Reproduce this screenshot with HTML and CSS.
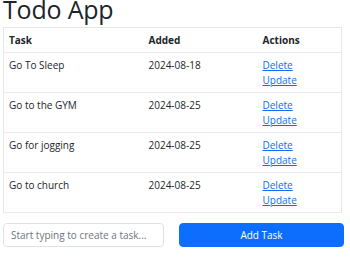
FILE: index.html
```html
<!DOCTYPE html>
<html lang="en">
<head>
    <meta charset="UTF-8">
    <title>Todo App</title>
    <link rel="stylesheet" href="styles.css">
</head>
<body>

    <div id="app">
        <h1 class="title">Todo App</h1>

        <table class="todos">
            <thead>
                <tr>
                    <th class="c-task">Task</th>
                    <th class="c-added">Added</th>
                    <th class="c-actions">Actions</th>
                </tr>
            </thead>
            <tbody>
                <tr>
                    <td>Go To Sleep</td>
                    <td>2024-08-18</td>
                    <td><a href="javascript:void(0)">Delete</a><a href="javascript:void(0)">Update</a></td>
                </tr>
                <tr>
                    <td>Go to the GYM</td>
                    <td>2024-08-25</td>
                    <td><a href="javascript:void(0)">Delete</a><a href="javascript:void(0)">Update</a></td>
                </tr>
                <tr>
                    <td>Go for jogging</td>
                    <td>2024-08-25</td>
                    <td><a href="javascript:void(0)">Delete</a><a href="javascript:void(0)">Update</a></td>
                </tr>
                <tr>
                    <td>Go to church</td>
                    <td>2024-08-25</td>
                    <td><a href="javascript:void(0)">Delete</a><a href="javascript:void(0)">Update</a></td>
                </tr>
            </tbody>
        </table>

        <form class="add" onsubmit="return false">
            <input type="text" class="field" placeholder="Start typing to create a task...">
            <button type="submit" class="btn">Add Task</button>
        </form>
    </div>

</body>
</html>
```

FILE: styles.css
```css
*{margin: 0;padding: 0;box-sizing: border-box;}
body{font-size: 10px; line-height: 15px; font-family: "Open Sans", "Noto Sans", sans-serif; color: #212529; background: #fff; overflow: hidden;}
a{color: #0d6efd; text-decoration: underline;}

#app{padding: 0 3px;}

.title{font-size: 25px; font-weight: 500; line-height: 18px; margin-bottom: 9px; letter-spacing: -0.2px;}

.todos{width: 339px; border-collapse: collapse; border: 1px solid #e5e7ea; table-layout: fixed;}
.todos th, .todos td{text-align: left; vertical-align: top; padding: 5px 5px 4px; border-bottom: 1px solid #e9ebee;}
.todos th{font-weight: 700;}
.todos .c-task{width: 140px;}
.todos .c-added{width: 114px;}
.todos td a{display: block; width: max-content;}

.add{display: flex; gap: 15px; margin-top: 10px;}
.field{width: 161px; height: 24px; padding: 0 7px; border: 1px solid #dee2e6; border-radius: 4px; font: inherit; color: #212529; outline: none;}
.field::placeholder{color: #6c757d;}
.btn{width: 165px; height: 24px; border: 1px solid #0d6efd; border-radius: 4px; background: #0d6efd; color: #fff; font: inherit; cursor: pointer;}
```
